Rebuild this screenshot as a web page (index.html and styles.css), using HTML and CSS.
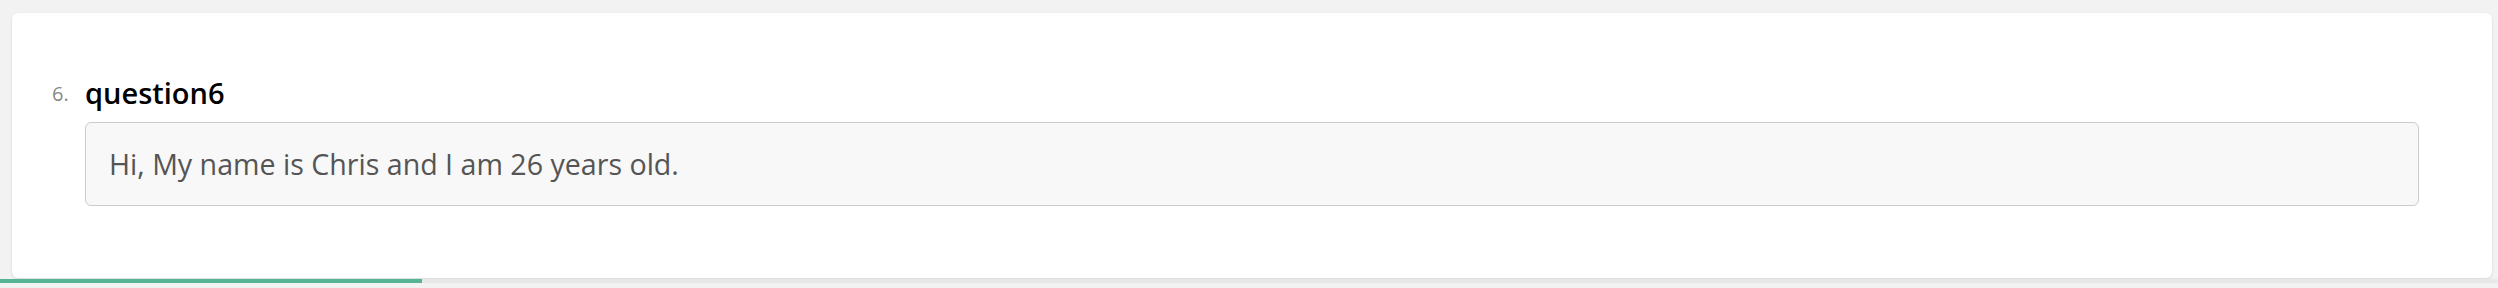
FILE: index.html
```html
<!DOCTYPE html>
<html>
	<head>
		<meta charset="UTF-8">
		<title>question6</title>
		<link rel="stylesheet" href="styles.css">
	</head>
	<body>
		<div class="card">
			<div class="question">
				<span class="num">6.</span>
				<div class="body">
					<p class="title">question6</p>
					<div class="answer">Hi, My name is Chris and I am 26 years old.</div>
				</div>
			</div>
		</div>
		<div class="progress"><div class="bar" style="width:422px"></div></div>
	</body>
</html>
```

FILE: styles.css
```css
*{margin:0;padding:0;box-sizing:border-box;}
body{
	background:#f2f2f2;
	font-family:"Open Sans","Noto Sans",sans-serif;
}
.card{
	margin:13px 6px 0 12px;
	height:265px;
	background:#fff;
	border-radius:6px;
	box-shadow:0 1px 3px rgba(0,0,0,.12);
	padding:60px 73px 0 40px;
}
.question{display:flex;}
.num{
	width:33px;
	font-size:20px;
	color:#888;
	line-height:40px;
	padding-top:1px;
}
.body{flex:1;}
.title{
	font-size:29px;
	font-weight:600;
	color:#000;
	line-height:40px;
	margin-bottom:9px;
}
.answer{
	height:84px;
	line-height:82px;
	padding:0 23px;
	background:#f8f8f8;
	border:1px solid #ccc;
	border-radius:6px;
	font-size:28.6px;
	color:#555;
}
.progress{
	margin-top:1px;
	height:4px;
	background:#e8e8e8;
}
.bar{height:4px;background:#56b395;}
```
